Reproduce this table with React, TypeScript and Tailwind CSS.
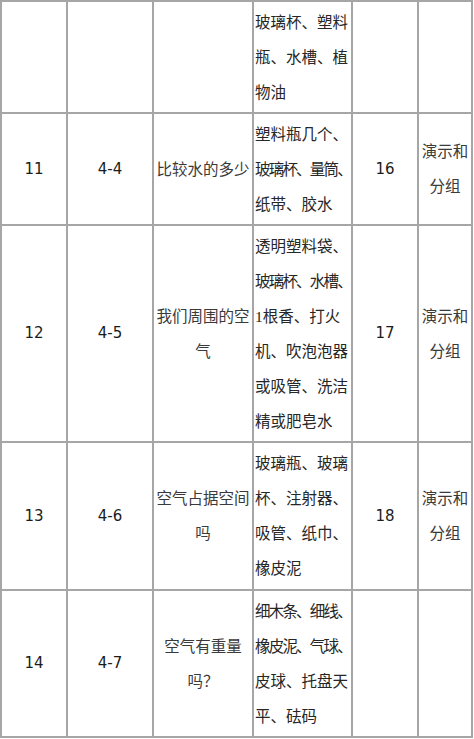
type Row = {
  no: string;
  lesson: string;
  title: string[];
  items: { text: string; tight?: boolean }[];
  hours: string;
  mode: string[];
};

const rows: Row[] = [
  {
    no: '',
    lesson: '',
    title: [],
    items: [{ text: '玻璃杯、塑料' }, { text: '瓶、水槽、植' }, { text: '物油' }],
    hours: '',
    mode: [],
  },
  {
    no: '11',
    lesson: '4-4',
    title: ['比较水的多少'],
    items: [{ text: '塑料瓶几个、' }, { text: '玻璃杯、量筒、', tight: true }, { text: '纸带、胶水' }],
    hours: '16',
    mode: ['演示和', '分组'],
  },
  {
    no: '12',
    lesson: '4-5',
    title: ['我们周围的空', '气'],
    items: [
      { text: '透明塑料袋、' },
      { text: '玻璃杯、水槽、', tight: true },
      { text: '1根香、打火' },
      { text: '机、吹泡泡器' },
      { text: '或吸管、洗洁' },
      { text: '精或肥皂水' },
    ],
    hours: '17',
    mode: ['演示和', '分组'],
  },
  {
    no: '13',
    lesson: '4-6',
    title: ['空气占据空间', '吗'],
    items: [{ text: '玻璃瓶、玻璃' }, { text: '杯、注射器、' }, { text: '吸管、纸巾、' }, { text: '橡皮泥' }],
    hours: '18',
    mode: ['演示和', '分组'],
  },
  {
    no: '14',
    lesson: '4-7',
    title: ['空气有重量', '吗？'],
    items: [
      { text: '细木条、细线、', tight: true },
      { text: '橡皮泥、气球、', tight: true },
      { text: '皮球、托盘天' },
      { text: '平、砝码' },
    ],
    hours: '',
    mode: [],
  },
];

const cjk = "font-['Liberation_Serif','Noto_Sans_CJK_SC',serif]";
const num = "font-['DejaVu_Sans','Noto_Sans_CJK_SC',sans-serif]";

const Cell = ({ children, className = '' }: { children?: React.ReactNode; className?: string }) => (
  <div className={`bg-white flex items-center ${className}`}>{children}</div>
);

export default function App() {
  return (
    <div className="w-[474px] h-[739px] bg-white">
      <div className="w-[473px] bg-[#a6a6a6] p-[2px] grid gap-[2px] grid-cols-[64px_84px_98px_97px_64px_52px] grid-rows-[110px_110px_215px_146px_145px]">
        {rows.map((r, i) => (
          <div key={i} className="contents">
            <Cell className={`justify-center text-[15px] text-[#1c1c1c] ${num}`}>{r.no}</Cell>
            <Cell className={`justify-center text-[15px] text-[#1c1c1c] ${num}`}>{r.lesson}</Cell>
            <Cell className={`justify-center ${cjk}`}>
              <div className="flex flex-col items-center text-[15.5px] leading-[35px] text-[#3a3a3a]">
                {r.title.map((t) => (
                  <span key={t} className="whitespace-nowrap">
                    {t}
                  </span>
                ))}
              </div>
            </Cell>
            <Cell className={`justify-start pl-[1px] ${cjk}`}>
              <div className="flex flex-col text-[15.5px] leading-[35px] text-[#262626]">
                {r.items.map((it) => (
                  <span
                    key={it.text}
                    className={`whitespace-nowrap ${it.tight ? 'tracking-[-1.8px]' : ''}`}
                  >
                    {it.text}
                  </span>
                ))}
              </div>
            </Cell>
            <Cell className={`justify-center text-[15px] text-[#1c1c1c] ${num}`}>{r.hours}</Cell>
            <Cell className={`justify-center ${cjk}`}>
              <div className="flex flex-col items-center text-[15.5px] leading-[35px] text-[#3a3a3a]">
                {r.mode.map((m) => (
                  <span key={m} className="whitespace-nowrap">
                    {m}
                  </span>
                ))}
              </div>
            </Cell>
          </div>
        ))}
      </div>
    </div>
  );
}
